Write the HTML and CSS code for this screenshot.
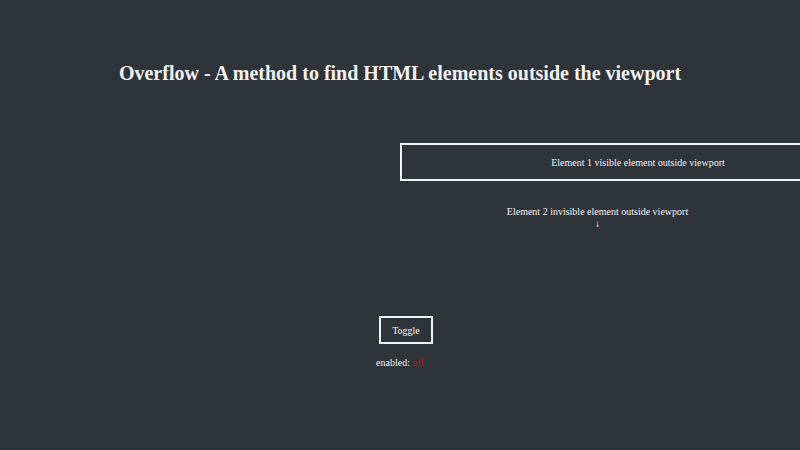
FILE: index.html
```
<!DOCTYPE html>
<html>
<head>
<meta charset="utf-8">
<link rel="stylesheet" href="styles.css">
</head>
<body>
<h1 class="title">Overflow - A method to find HTML elements outside the viewport</h1>
<div class="el el1">Element 1 visible element outside viewport</div>
<div class="el el2">Element 2 invisible element outside viewport<br>↓</div>
<div class="controls">
  <button class="toggle">Toggle</button>
  <div class="status">enabled: <span class="off">off</span></div>
</div>
</body>
</html>
```
FILE: styles.css
```
html, body {
  margin: 0;
  padding: 0;
  background: #2f333a;
  overflow: hidden;
  width: 800px;
  height: 450px;
}
body {
  font-family: "Liberation Serif", "Times New Roman", serif;
  color: #f2f2f2;
}
.title {
  margin: 0;
  padding-top: 60px;
  font-size: 20px;
  line-height: 26px;
  text-align: center;
  font-weight: bold;
}
.el {
  font-size: 10px;
  text-align: center;
  margin-left: 400px;
  box-sizing: border-box;
}
.el1 {
  margin-top: 57px;
  width: 476px;
  height: 38px;
  border: 2px solid #f2f2f2;
  display: flex;
  align-items: center;
  justify-content: center;
}
.el2 {
  margin-top: 25px;
  width: 395px;
  line-height: 12px;
}
.controls {
  display: flex;
  flex-direction: column;
  align-items: center;
  margin-top: 86px;
}
.toggle {
  font-family: "Liberation Serif", "Times New Roman", serif;
  font-size: 10px;
  color: #f2f2f2;
  background: transparent;
  border: 2px solid #f2f2f2;
  width: 54px;
  height: 28px;
  margin-left: 12px;
  padding: 0;
}
.status {
  font-size: 10px;
  margin-top: 13px;
}
.off {
  color: #c0161b;
}
```
